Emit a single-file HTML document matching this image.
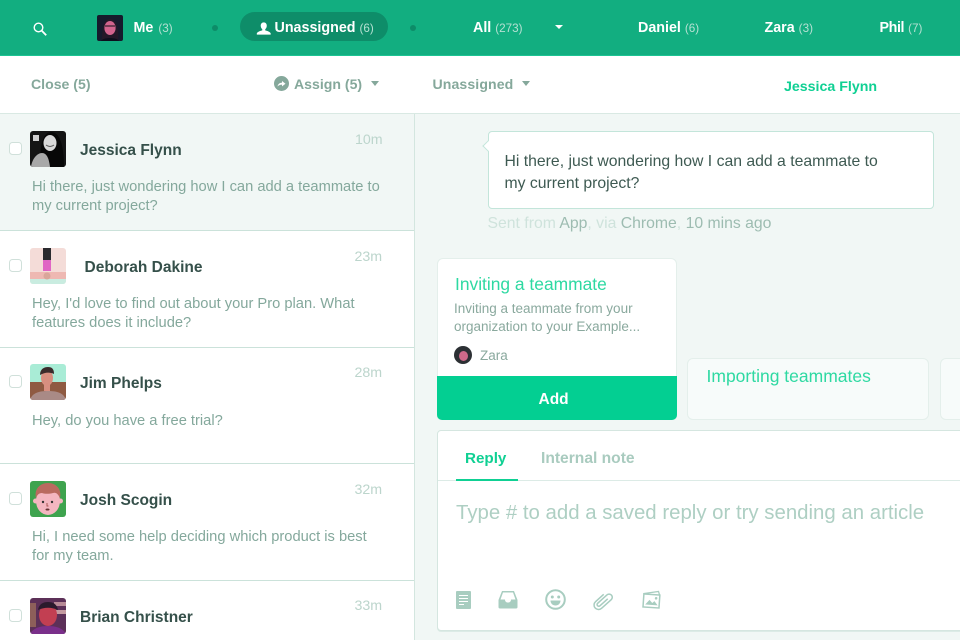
<!DOCTYPE html>
<html><head><meta charset="utf-8">
<style>
html,body{margin:0;padding:0;width:960px;height:640px;overflow:hidden;background:#fff}
body{position:relative;font-family:"Liberation Sans",sans-serif;-webkit-font-smoothing:antialiased}
.a{position:absolute;white-space:nowrap}
.nav{font-size:14.3px;font-weight:700;color:#fff;line-height:18px}
.nav small{font-size:11.7px;font-weight:400;color:#b4e0d2}
.tb{font-size:14.1px;font-weight:700;color:#85a89b;line-height:18px}
.line{position:absolute;left:0;width:414px;height:1px;background:#cbe2da}
.name{font-size:15.5px;font-weight:700;color:#35504a;line-height:20px}
.time{font-size:14.2px;color:#bcd5cc;line-height:18px}
.msg{font-size:14.7px;color:#84a89c;line-height:19px;white-space:nowrap}
.cb{position:absolute;left:9px;width:11px;height:11px;border:1px solid #d0e0da;border-radius:3.500px;background:#fff}
.av{position:absolute;left:30px;width:36px;height:36px;border-radius:3px;overflow:hidden}
</style></head><body>

<!-- top nav -->
<div class="a" style="left:0;top:0;width:960px;height:55px;background:#12ae80;border-bottom:1px solid #1cc493"></div>
<svg class="a" style="left:32px;top:21px" width="16" height="16" viewBox="0 0 16 16"><circle cx="6.500" cy="6.500" r="4.300" fill="none" stroke="#fff" stroke-width="1.400"/><path d="M9.800 9.800L14.200 14.200" stroke="#fff" stroke-width="1.800"/></svg>
<svg class="a" style="left:97px;top:15px;border-radius:2px" width="26" height="26" viewBox="0 0 26 26"><rect width="26" height="26" fill="#161a2c"/><path d="M5 26C5 12 7 4 13 4s9 7 8 22z" fill="#241828"/><ellipse cx="13" cy="13" rx="5.600" ry="7" fill="#d2648e"/><path d="M8 11h10" stroke="#3a2030" stroke-width="1.200"/><path d="M4 26c2-4 16-4 18 0z" fill="#0d0f1c"/></svg>
<div class="a nav" style="left:133.500px;top:19px">Me <small style="margin-left:1px">(3)</small></div>
<div class="a" style="left:212px;top:25px;width:6px;height:6px;border-radius:50%;background:#0d8c68"></div>
<div class="a" style="left:240px;top:12px;width:148px;height:29px;border-radius:15px;background:#0e8d69"></div>
<svg class="a" style="left:255.500px;top:21.500px" width="15.500" height="13" viewBox="0 0 17 15"><path d="M8.500 0.500c2.300 0 3.500 1.700 3.500 3.800 0 1.900-.9 3.300-1.800 4.100v1.300c2.700.6 5.300 1.800 6.300 3.300v1.500H.5v-1.500c1-1.500 3.600-2.700 6.300-3.300V8.400C5.900 7.600 5 6.200 5 4.300 5 2.200 6.200.5 8.500.5z" fill="#fff"/></svg>
<div class="a nav" style="left:274.500px;top:19px">Unassigned <small>(6)</small></div>
<div class="a" style="left:410px;top:25px;width:6px;height:6px;border-radius:50%;background:#0d8c68"></div>
<div class="a nav" style="left:473px;top:19px">All <small>(273)</small></div>
<div class="a" style="left:555px;top:24.500px;width:0;height:0;border-left:4px solid transparent;border-right:4px solid transparent;border-top:4.500px solid #fff"></div>
<div class="a nav" style="left:638px;top:19px">Daniel <small>(6)</small></div>
<div class="a nav" style="left:764.500px;top:19px">Zara <small>(3)</small></div>
<div class="a nav" style="left:879.500px;top:19px"><span style="letter-spacing:-.4px">Phil</span> <small>(7)</small></div>

<!-- toolbar -->
<div class="a" style="left:0;top:113px;width:960px;height:1.500px;background:#d9e9e3"></div>
<div class="a tb" style="left:31px;top:75px">Close (5)</div>
<svg class="a" style="left:274px;top:76px" width="15" height="15" viewBox="0 0 15 15"><circle cx="7.500" cy="7.500" r="7.500" fill="#85a89b"/><path d="M3.500 10.500c.5-2.500 2-3.800 4.500-3.800V5l3.500 2.700L8 10.400V8.600c-1.800 0-3.300.6-4.500 1.900z" fill="#fff"/></svg>
<div class="a tb" style="left:294px;top:75px">Assign (5)</div>
<div class="a" style="left:370.500px;top:81px;width:0;height:0;border-left:4.500px solid transparent;border-right:4.500px solid transparent;border-top:5px solid #85a89b"></div>
<div class="a tb" style="left:432.500px;top:75px;letter-spacing:.1px">Unassigned</div>
<div class="a" style="left:522px;top:81px;width:0;height:0;border-left:4.500px solid transparent;border-right:4.500px solid transparent;border-top:5px solid #85a89b"></div>
<div class="a" style="left:784px;top:78px;font-size:14.200px;font-weight:700;color:#0fd093;line-height:18px">Jessica Flynn</div>

<!-- right bg -->
<div class="a" style="left:415px;top:114px;width:545px;height:526px;background:#f1f7f5"></div>
<div class="a" style="left:414px;top:114px;width:1px;height:526px;background:#d3e6df"></div>

<!-- list -->
<div class="a" style="left:0;top:114px;width:414px;height:116px;background:#f1f7f5"></div>
<div class="line" style="top:230px"></div>
<div class="line" style="top:347px"></div>
<div class="line" style="top:463px"></div>
<div class="line" style="top:580px"></div>

<div class="cb" style="top:142px"></div>
<div class="cb" style="top:259px"></div>
<div class="cb" style="top:375px"></div>
<div class="cb" style="top:492px"></div>
<div class="cb" style="top:609px"></div>

<svg class="av" style="top:131px" viewBox="0 0 36 36"><rect width="36" height="36" fill="#141414"/><rect x="3" y="4" width="6" height="6" fill="#cfcfcf"/><path d="M11 36C9 18 12 1 21 1s13 14 13 35z" fill="#070707"/><ellipse cx="20" cy="12" rx="6.500" ry="8" fill="#d8d8d8"/><path d="M16 14q4 3 8 0" stroke="#555" fill="none"/><path d="M1 36c1-8 6-14 11-14s7 6 8 14z" fill="#a8a8a8"/></svg>
<svg class="av" style="top:248px" viewBox="0 0 36 36"><rect width="36" height="36" fill="#f4dcd8"/><rect y="24" width="36" height="7" fill="#eeb8b2"/><rect y="31" width="36" height="5" fill="#c9ece0"/><rect x="13" y="0" width="8" height="12" fill="#2a2a2e"/><rect x="13" y="12" width="8" height="11" fill="#e065c4"/><circle cx="17" cy="28" r="3.500" fill="#d9a69a"/></svg>
<svg class="av" style="top:364px" viewBox="0 0 36 36"><rect width="36" height="18" fill="#a9ecd6"/><rect y="18" width="36" height="18" fill="#8f5a42"/><path d="M0 36c2-7 9-9 18-9s16 2 18 9z" fill="#a98a86"/><ellipse cx="17" cy="14" rx="6" ry="8" fill="#d88f80"/><path d="M10 11c0-6 4-8 8-8s6 2 6 7c-4-2-9-2-14 1z" fill="#3b2b2b"/><rect x="14" y="20" width="6" height="7" fill="#d88f80"/></svg>
<svg class="av" style="top:481px" viewBox="0 0 36 36"><rect width="36" height="36" fill="#3ea34e"/><ellipse cx="18" cy="20" rx="12" ry="14" fill="#f4b6c0"/><circle cx="5.500" cy="20" r="2.500" fill="#f4b6c0"/><circle cx="30.500" cy="20" r="2.500" fill="#f4b6c0"/><path d="M6 17C4 8 10 2 18 2s14 6 12 15c-2-4-4-6-7-5-4 1-8 1-11 0-3 0-5 2-6 5z" fill="#b96a5f"/><circle cx="13" cy="21" r="1.200" fill="#333"/><circle cx="22" cy="21" r="1.200" fill="#333"/><path d="M17 22v3h1.500" stroke="#a55" fill="none"/><ellipse cx="17.500" cy="28.500" rx="2" ry="1" fill="#633"/></svg>
<svg class="av" style="top:598px" viewBox="0 0 36 36"><rect width="36" height="36" fill="#5c3058"/><rect x="24" y="4" width="12" height="4" fill="#b78a96"/><rect x="24" y="12" width="12" height="4" fill="#c49aa0"/><rect x="0" y="5" width="6" height="24" fill="#8d5f5a"/><path d="M0 36c3-6 10-8 18-8s15 2 18 8z" fill="#7a2f8a"/><ellipse cx="18" cy="17" rx="9" ry="11" fill="#c23f52"/><path d="M8 12c1-6 5-8 10-8s9 2 10 8c-6-3-14-3-20 0z" fill="#2a1a2c"/></svg>

<div class="a name" style="left:80px;top:141px">Jessica Flynn</div>
<div class="a name" style="left:84.500px;top:258px">Deborah Dakine</div>
<div class="a name" style="left:80px;top:374px">Jim Phelps</div>
<div class="a name" style="left:80px;top:491px">Josh Scogin</div>
<div class="a name" style="left:80px;top:608px">Brian Christner</div>

<div class="a time" style="left:355px;top:130.500px">10m</div>
<div class="a time" style="left:354.500px;top:247.500px">23m</div>
<div class="a time" style="left:354.500px;top:363.500px">28m</div>
<div class="a time" style="left:354.500px;top:480.500px">32m</div>
<div class="a time" style="left:354.500px;top:596.500px">33m</div>

<div class="a msg" style="left:32px;top:178px">Hi there, just wondering how I can add a teammate to<br>my current project?</div>
<div class="a msg" style="left:32px;top:295px">Hey, I'd love to find out about your Pro plan. What<br>features does it include?</div>
<div class="a msg" style="left:32px;top:411.500px">Hey, do you have a free trial?</div>
<div class="a msg" style="left:32px;top:528px">Hi, I need some help deciding which product is best<br>for my team.</div>

<!-- message bubble -->
<div class="a" style="left:487.500px;top:131px;width:446.500px;height:78px;box-sizing:border-box;background:#fff;border:1.500px solid #c3e5da;border-radius:4px"></div>
<div class="a" style="left:484px;top:142px;width:7px;height:7px;background:#fff;border-left:1px solid #c3e5da;border-bottom:1px solid #c3e5da;transform:rotate(45deg)"></div>
<div class="a" style="left:504.500px;top:150.500px;font-size:15.770px;color:#3e5a52;line-height:22px">Hi there, just wondering how I can add a teammate to<br>my current project?</div>
<div class="a" style="left:487.500px;top:214px;font-size:15.780px;color:#cfe3dc;line-height:20px">Sent from <span style="color:#9dbcb1">App</span>, via <span style="color:#9dbcb1">Chrome</span>, <span style="color:#9dbcb1">10 mins ago</span></div>

<!-- cards -->
<div class="a" style="left:436.500px;top:258px;width:240px;height:162px;box-sizing:border-box;background:#fff;border:1.500px solid #e4efeb;border-radius:6px 6px 4px 4px"></div>
<div class="a" style="left:436.500px;top:375.500px;width:240px;height:44.500px;background:#03cf92;border-radius:0 0 5px 5px"></div>
<div class="a" style="left:455px;top:273.500px;font-size:17.400px;color:#2ed9a2;line-height:20px">Inviting a teammate</div>
<div class="a" style="left:454px;top:300px;font-size:13.500px;color:#8aa99e;line-height:18px">Inviting a teammate from your<br>organization to your Example...</div>
<svg class="a" style="left:454px;top:346px" width="18" height="18" viewBox="0 0 18 18"><circle cx="9" cy="9" r="9" fill="#2c3034"/><ellipse cx="9.500" cy="10" rx="4.500" ry="5" fill="#cf6a8a"/></svg>
<div class="a" style="left:480px;top:347px;font-size:13.500px;color:#8aa99e;line-height:18px">Zara</div>
<div class="a" style="left:538.500px;top:391px;font-size:15.500px;font-weight:700;color:#fff;line-height:18px">Add</div>

<div class="a" style="left:686.500px;top:357.500px;width:242px;height:62.500px;box-sizing:border-box;background:#f7fbfa;border:1.500px solid #e4efeb;border-radius:6px"></div>
<div class="a" style="left:706.500px;top:366px;font-size:17.500px;color:#2ed9a2;line-height:20px">Importing teammates</div>
<div class="a" style="left:939.500px;top:357.500px;width:40px;height:62.500px;box-sizing:border-box;background:#f7fbfa;border:1.500px solid #e4efeb;border-radius:6px"></div>

<!-- composer -->
<div class="a" style="left:436.500px;top:430px;width:540px;height:201px;box-sizing:border-box;background:#fff;border:1.500px solid #d5e6e0;border-radius:4px;box-shadow:0 1px 0 #dcebe6"></div>
<div class="a" style="left:438px;top:479.500px;width:522px;height:1.500px;background:#dcebe6"></div>
<div class="a" style="left:456px;top:478.500px;width:62px;height:2.500px;background:#0fd093"></div>
<div class="a" style="left:465px;top:449.500px;font-size:15.200px;font-weight:700;color:#0fd093;line-height:18px">Reply</div>
<div class="a" style="left:541px;top:449.500px;font-size:15.600px;font-weight:700;color:#a9cbbf;line-height:18px">Internal note</div>
<div class="a" style="left:456px;top:500px;font-size:20.400px;color:#aecfc3;line-height:26px">Type # to add a saved reply or try sending an article</div>

<!-- composer icons -->
<svg class="a" style="left:456px;top:591px" width="15" height="18" viewBox="0 0 15 18"><rect width="15" height="18" rx="1" fill="#a8cdc0"/><path d="M3 4.500h9M3 7.500h9M3 10.500h9M3 13.500h5" stroke="#fff" stroke-width="1"/></svg>
<svg class="a" style="left:498px;top:590px" width="20" height="19" viewBox="0 0 20 19"><path d="M4 1h12l3.500 9v7a1.500 1.500 0 0 1-1.500 1.500H2A1.500 1.500 0 0 1 .5 17v-7z" fill="#a8cdc0"/><path d="M5 2.500h10l2.500 7H13c0 2-1.300 3-3 3s-3-1-3-3H2.500z" fill="#fff"/></svg>
<svg class="a" style="left:545px;top:589px" width="21" height="21" viewBox="0 0 21 21"><circle cx="10.500" cy="10.500" r="9.300" fill="none" stroke="#a8cdc0" stroke-width="2"/><circle cx="7.300" cy="8" r="1.500" fill="#a8cdc0"/><circle cx="13.700" cy="8" r="1.500" fill="#a8cdc0"/><path d="M5.500 11.500h10c0 3-2.200 5-5 5s-5-2-5-5z" fill="#a8cdc0"/></svg>
<svg class="a" style="left:591px;top:588.500px" width="24" height="24" viewBox="0 0 24 24"><g transform="rotate(48 12 12)"><path d="M7.500 7v11a4.500 4.500 0 0 0 9 0V5a3.200 3.200 0 0 0-6.400 0v12.500a1.700 1.700 0 0 0 3.400 0V7" fill="none" stroke="#a8cdc0" stroke-width="1.500"/></g></svg>
<svg class="a" style="left:642px;top:590px" width="20" height="20" viewBox="0 0 20 20"><path d="M2.500 6.500L2 3.500 16.500 1.500l1.500 5" fill="none" stroke="#a8cdc0" stroke-width="1.300"/><g transform="rotate(4 10 10)"><rect x="1.500" y="4.500" width="16" height="13" fill="#fff" stroke="#a8cdc0" stroke-width="1.500"/><path d="M3.500 15l4-5 3 3 2-2 3.500 4z" fill="#a8cdc0"/><circle cx="14" cy="8" r="1.300" fill="#a8cdc0"/></g></svg>

</body></html>
